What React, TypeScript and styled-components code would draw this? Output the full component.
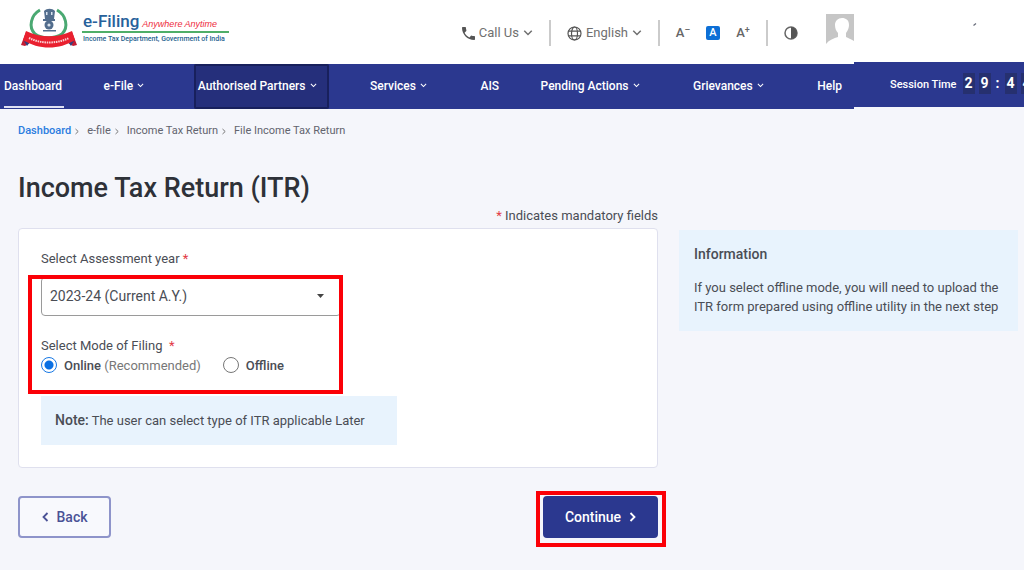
import React from "react";
import styled, { createGlobalStyle, css } from "styled-components";

const GlobalStyle = createGlobalStyle`
  *, *::before, *::after { box-sizing: border-box; }
  html, body { margin: 0; padding: 0; }
  body {
    background: #fff;
    color: #4a4d55;
    font-family: Roboto, "Liberation Sans", sans-serif;
    font-size: 13px;
    overflow-x: hidden;
  }
  button, select, input { font: inherit; color: inherit; margin: 0; }
`;

const navy = "#2b388f";
const red = "#fb0007";

const Page = styled.div`
  min-height: 100vh;
  display: flex;
  flex-direction: column;
  border-bottom: 1px solid #fff;
`;

/* ---------- Top bar ---------- */
const TopBar = styled.header`
  display: flex;
  align-items: flex-start;
  height: 62px;
  padding-left: 20px;
  background: #fff;
`;
const Brand = styled.a`
  display: flex;
  align-items: flex-start;
  gap: 4px;
  padding-top: 7px;
  text-decoration: none;
`;
const BrandText = styled.span`
  display: flex;
  flex-direction: column;
  padding-top: 4px;
`;
const BrandTop = styled.span`
  display: flex;
  align-items: baseline;
  gap: 3px;
  padding: 0 4px 0 1px;
  height: 20px;
  line-height: 20px;
  border-bottom: 2px solid #4fae68;
  box-sizing: content-box;
`;
const BrandName = styled.span`
  color: #27619b;
  font-size: 17px;
  font-weight: 500;
`;
const Tagline = styled.span`
  color: #ee2b3c;
  font: italic 400 9px/12px "Liberation Sans", sans-serif;
`;
const Department = styled.span`
  padding: 0 4px 0 1px;
  color: #1f5f8e;
  font-size: 7px;
  font-weight: 500;
  line-height: 12px;
  white-space: nowrap;
`;
const Tools = styled.div`
  display: flex;
  align-items: center;
  height: 26px;
  margin: 20px 0 0 auto;
`;
const ToolButton = styled.button`
  display: flex;
  align-items: center;
  gap: 4px;
  padding: 0;
  border: 0;
  background: none;
  color: #707070;
  font-size: 13px;
  line-height: 24px;
  white-space: nowrap;
`;
const Divider = styled.span`
  width: 2px;
  height: 26px;
  margin: 0 16px;
  background: #cbcbcb;
`;
const TextSizes = styled.div`
  display: flex;
  align-items: center;
  gap: 16px;
`;
const SizeButton = styled.button<{ $on?: boolean }>`
  width: 14px;
  height: 14px;
  padding: 0;
  border: 0;
  border-radius: 2px;
  background: ${(p) => (p.$on ? "#0d6fd6" : "none")};
  color: ${(p) => (p.$on ? "#fff" : "#666")};
  font-size: ${(p) => (p.$on ? 11 : 13)}px;
  font-weight: 500;
  line-height: 14px;
  white-space: nowrap;
  display: flex;
  justify-content: center;
`;
const Sign = styled.span`
  font-size: 9px;
  line-height: 8px;
`;
const UserArea = styled.div`
  display: flex;
  justify-content: space-between;
  width: 198px;
  margin-left: 28px;
  padding: 14px 47px 0 0;
`;

/* ---------- Navigation ---------- */
const NavRow = styled.div`
  display: flex;
  align-items: flex-start;
  background: #f5f6fb;
`;
const Menu = styled.nav`
  flex: 1;
  display: flex;
  justify-content: space-between;
  height: 47px;
  border-top: 2px solid #fff;
  padding-right: 12px;
  background: ${navy};
`;
const MenuLink = styled.a<{ $drop?: boolean; $current?: boolean; $focused?: boolean }>`
  position: relative;
  display: flex;
  align-items: center;
  gap: 4px;
  padding: 0 ${(p) => (p.$drop ? 12 : 0)}px 2px 4px;
  color: #fff;
  font-size: 12px;
  font-weight: 500;
  text-decoration: none;
  white-space: nowrap;
  ${(p) =>
    p.$focused &&
    css`
      background: #252f7b;
      border-radius: 2px;
      box-shadow: inset 0 0 0 2px #18205c;
    `}
  ${(p) =>
    p.$current &&
    css`
      &::after {
        content: "";
        position: absolute;
        left: 4px;
        right: -2px;
        bottom: 1px;
        height: 2px;
        background: #dfe1f3;
      }
    `}
`;
const Session = styled.div`
  display: flex;
  align-items: center;
  gap: 6px;
  width: 170px;
  height: 45px;
  padding-left: 36px;
  background: ${navy};
  color: #fff;
  font-size: 11px;
  font-weight: 500;
  white-space: nowrap;
  overflow: hidden;
`;
const Timer = styled.span`
  display: flex;
  align-items: center;
  gap: 4px;
`;
const Digit = styled.span<{ $plain?: boolean }>`
  flex: none;
  width: ${(p) => (p.$plain ? 6 : 12)}px;
  margin-bottom: 2px;
  background: ${(p) => (p.$plain ? "none" : "#26306f")};
  font-size: 14px;
  font-weight: 700;
  line-height: 21px;
  text-align: center;
`;

/* ---------- Content ---------- */
const Main = styled.main`
  flex: 1;
  padding: 14px 6px 23px 18px;
  background: #f5f6fb;
`;
const Crumbs = styled.nav`
  display: flex;
  align-items: center;
  gap: 4px;
  line-height: 16px;
  font-size: 11px;
  color: #62646e;
`;
const Crumb = styled.a<{ $first?: boolean }>`
  color: ${(p) => (p.$first ? "#2b7de0" : "inherit")};
  font-weight: ${(p) => (p.$first ? 500 : 400)};
  text-decoration: none;
`;
const CrumbMark = styled.svg`
  margin-right: 4px;
`;
const Title = styled.h1`
  margin: 33px 0 0;
  color: #2e3138;
  font-size: 27px;
  font-weight: 500;
  line-height: 32px;
`;
const Columns = styled.div`
  display: grid;
  grid-template-columns: 640fr 339fr;
  column-gap: 21px;
  align-items: start;
`;
const Mandatory = styled.p`
  margin: 3px 0 4px;
  line-height: 17px;
  text-align: right;
`;
const Star = styled.span`
  color: #e23b46;
`;
const Card = styled.section`
  padding: 20px 22px 22px;
  border: 1px solid #dfe0ee;
  border-radius: 4px;
  background: #fff;
`;
const Label = styled.label`
  display: block;
  line-height: 20px;
`;
const RedFrame = styled.div<{ $inset: string }>`
  position: relative;
  &::after {
    content: "";
    position: absolute;
    inset: ${(p) => p.$inset};
    border: 4px solid ${red};
    pointer-events: none;
  }
`;
const FilingOptions = styled(RedFrame)`
  width: 300px;
  margin-top: 8px;
`;
const SelectBox = styled.div`
  position: relative;
`;
const Select = styled.select`
  display: block;
  width: 100%;
  height: 39px;
  padding: 0 30px 2px 8px;
  border: 1px solid #9a9a9a;
  border-radius: 4px;
  appearance: none;
  background: #fff;
  font-size: 14px;
`;
const SelectArrow = styled.svg`
  position: absolute;
  right: 17px;
  top: 17px;
  pointer-events: none;
`;
const Modes = styled.fieldset`
  margin: 0;
  padding: 20px 0 18px;
  border: 0;
`;
const Legend = styled.legend`
  float: left;
  width: 100%;
  padding: 0;
  line-height: 20px;
`;
const Options = styled.div`
  clear: both;
  display: flex;
  align-items: center;
  gap: 22px;
  height: 18px;
`;
const Option = styled.label`
  display: flex;
  align-items: center;
  gap: 7px;
  font-weight: 500;
  white-space: nowrap;
`;
const Radio = styled.input`
  appearance: none;
  width: 16px;
  height: 16px;
  border: 1px solid #777;
  border-radius: 50%;
  background: #fff;
  &:checked {
    border-color: #1677e4;
    background: radial-gradient(circle, #0b70e3 4px, #fff 5px);
  }
`;
const Soft = styled.span`
  color: #777;
  font-weight: 400;
`;
const Note = styled.p`
  width: 356px;
  max-width: 100%;
  margin: 4px 0 0;
  padding: 14px;
  background: #e8f3fd;
  line-height: 21px;
`;
const Strong = styled.strong`
  font-size: 14px;
  font-weight: 500;
`;
const Info = styled.aside`
  margin-top: 26px;
  padding: 14px 15px 15px;
  background: #e8f3fd;
`;
const InfoTitle = styled.h2`
  margin: 0 0 14px;
  font-size: 14px;
  font-weight: 500;
  line-height: 20px;
`;
const InfoText = styled.p`
  margin: 0;
  line-height: 19px;
`;
const Actions = styled.div`
  display: flex;
  justify-content: space-between;
  margin-top: 28px;
`;
const Button = styled.button<{ $primary?: boolean }>`
  display: flex;
  align-items: center;
  justify-content: center;
  gap: 8px;
  width: ${(p) => (p.$primary ? 115 : 93)}px;
  height: 42px;
  padding: 0;
  border: 2px solid ${(p) => (p.$primary ? navy : "#8e94ca")};
  border-radius: 4px;
  background: ${(p) => (p.$primary ? navy : "#f8f9fd")};
  color: ${(p) => (p.$primary ? "#fff" : "#4a5296")};
  font-size: 14px;
  font-weight: 500;
`;

const Chevron = ({ size = 7 }: { size?: number }) => (
  <svg width={size} height={size} viewBox="0 0 8 8" fill="none" stroke="currentColor" strokeWidth="1.2" aria-hidden>
    <path d="M1 2.2 4 5.2 7 2.2" />
  </svg>
);

const Emblem = () => (
  <svg width="58" height="42" viewBox="0 0 58 42" aria-hidden>
    <g fill="none" stroke="#4aa972" strokeWidth="3">
      <path d="M20 3C11 8 8 20 15 27c6 5 20 5 27 0 7-7 4-19-5-24" />
    </g>
    <g fill="#526d8d">
      <path d="M24 4c3-3 8-3 11 0l-1 8h-9z" />
      <rect x="23" y="12" width="12" height="2" />
      <circle cx="29" cy="18" r="4.5" />
      <rect x="23" y="23" width="13" height="1.5" />
    </g>
    <g fill="#d9e3ee">
      <rect x="26" y="5" width="1.5" height="3" />
      <rect x="31" y="5" width="1.5" height="3" />
      <circle cx="29" cy="18" r="1.6" />
    </g>
    <path d="M1 38l5-13 5 10-6 4zM57 38l-5-13-5 10 6 4z" fill="#c31b32" />
    <path d="M4 34l6 1-3 4zM54 34l-6 1 3 4z" fill="#33427d" />
    <path d="M6 24c14 7 32 7 46 0l3 9c-16 10-36 10-52 0z" fill="#e9202f" />
    <path d="M9 31c12 6 28 6 40 0" fill="none" stroke="#fbd3d6" strokeWidth="2" strokeDasharray="1.5 .8" />
  </svg>
);

const menu = [
  { text: "Dashboard", current: true },
  { text: "e-File", drop: true },
  { text: "Authorised Partners", drop: true, focused: true },
  { text: "Services", drop: true },
  { text: "AIS" },
  { text: "Pending Actions", drop: true },
  { text: "Grievances", drop: true },
  { text: "Help" },
];

const crumbs = ["Dashboard", "e-file", "Income Tax Return", "File Income Tax Return"];

export default function App() {
  return (
    <Page>
      <GlobalStyle />
      <TopBar>
        <Brand href="#">
          <Emblem />
          <BrandText>
            <BrandTop>
              <BrandName>e-Filing</BrandName>
              <Tagline>Anywhere Anytime</Tagline>
            </BrandTop>
            <Department>Income Tax Department, Government of India</Department>
          </BrandText>
        </Brand>
        <Tools>
          <ToolButton>
            <svg width="13" height="13" viewBox="3 3 18 18" fill="#555" aria-hidden>
              <path d="M6.600 10.800c1.400 2.800 3.800 5.100 6.600 6.600l2.200-2.200c.3-.3.7-.4 1-.2 1.100.4 2.300.6 3.600.6.6 0 1 .4 1 1V20c0 .6-.4 1-1 1C10.600 21 3 13.400 3 4c0-.6.4-1 1-1h3.500c.6 0 1 .4 1 1 0 1.300.2 2.500.6 3.600.1.300 0 .7-.2 1z" />
            </svg>
            Call Us
            <Chevron size={10} />
          </ToolButton>
          <Divider />
          <ToolButton>
            <svg width="15" height="15" viewBox="0 0 15 15" fill="none" stroke="#555" strokeWidth="1.2" aria-hidden>
              <circle cx="7.500" cy="7.500" r="6.500" />
              <ellipse cx="7.500" cy="7.500" rx="3" ry="6.500" />
              <path d="M1.500 5.200h12M1.500 9.800h12" />
            </svg>
            English
            <Chevron size={10} />
          </ToolButton>
          <Divider />
          <TextSizes>
            <SizeButton aria-label="Decrease text size">A<Sign>–</Sign></SizeButton>
            <SizeButton $on aria-label="Normal text size">A</SizeButton>
            <SizeButton aria-label="Increase text size">A<Sign>+</Sign></SizeButton>
          </TextSizes>
          <Divider />
          <ToolButton aria-label="Contrast">
            <svg width="14" height="14" viewBox="0 0 14 14" aria-hidden>
              <circle cx="7" cy="7" r="6" fill="#fff" stroke="#666" strokeWidth="1.500" />
              <path d="M7 1a6 6 0 0 1 0 12z" fill="#555" />
            </svg>
          </ToolButton>
        </Tools>
        <UserArea>
          <svg width="28" height="30" viewBox="0 0 28 30" role="img" aria-label="Profile">
            <path d="M0 0h28v27c-3-2-6-3-8-4v-4c2-3 3-5 3-8 0-5-3-7-7-7s-7 3-7 7c0 3 1 6 3 8v4c-4 1-9 3-12 7z" fill="#c6c6c6" />
          </svg>
          <svg width="4" height="14" viewBox="0 0 4 14" aria-hidden>
            <path d="M.5 11.500 3 9.500" stroke="#666a78" strokeWidth="1.300" />
          </svg>
        </UserArea>
      </TopBar>
      <NavRow>
        <Menu>
          {menu.map((m) => (
            <MenuLink key={m.text} href="#" $drop={m.drop} $current={m.current} $focused={m.focused}>
              {m.text}
              {m.drop && <Chevron />}
            </MenuLink>
          ))}
        </Menu>
        <Session>
          Session Time
          <Timer>
            <Digit>2</Digit>
            <Digit>9</Digit>
            <Digit $plain>:</Digit>
            <Digit>4</Digit>
            <Digit>4</Digit>
          </Timer>
        </Session>
      </NavRow>
      <Main>
        <Crumbs aria-label="Breadcrumb">
          {crumbs.map((c, i) => (
            <React.Fragment key={c}>
              <Crumb href="#" $first={i === 0}>{c}</Crumb>
              {i < crumbs.length - 1 && (
                <CrumbMark width="4" height="7" viewBox="0 0 4 7" fill="none" stroke="#777" aria-hidden>
                  <path d="M.5 1 3.200 3.500.5 6" />
                </CrumbMark>
              )}
            </React.Fragment>
          ))}
        </Crumbs>
        <Title>Income Tax Return (ITR)</Title>
        <Columns>
          <div>
            <Mandatory><Star>*</Star> Indicates mandatory fields</Mandatory>
            <Card>
              <Label htmlFor="year">Select Assessment year <Star>*</Star></Label>
              <FilingOptions $inset="-2px -2px -2px -13px">
                <SelectBox>
                  <Select id="year">
                    <option>2023-24 (Current A.Y.)</option>
                  </Select>
                  <SelectArrow width="7" height="4" viewBox="0 0 7 4" aria-hidden>
                    <path d="M0 0h7L3.500 4z" fill="#444" />
                  </SelectArrow>
                </SelectBox>
                <Modes>
                  <Legend>Select Mode of Filing &nbsp;<Star>*</Star></Legend>
                  <Options>
                    <Option>
                      <Radio type="radio" name="mode" defaultChecked />
                      <span>Online <Soft>(Recommended)</Soft></span>
                    </Option>
                    <Option>
                      <Radio type="radio" name="mode" />
                      Offline
                    </Option>
                  </Options>
                </Modes>
              </FilingOptions>
              <Note><Strong>Note:</Strong> The user can select type of ITR applicable Later</Note>
            </Card>
            <Actions>
              <Button>
                <svg width="7" height="10" viewBox="0 0 7 10" fill="none" stroke="currentColor" strokeWidth="1.800" aria-hidden>
                  <path d="M5.500 1 1.500 5l4 4" />
                </svg>
                Back
              </Button>
              <RedFrame $inset="-5px -8px -9px -7px">
                <Button $primary>
                  Continue
                  <svg width="7" height="10" viewBox="0 0 7 10" fill="none" stroke="currentColor" strokeWidth="1.800" aria-hidden>
                    <path d="M1.500 1l4 4-4 4" />
                  </svg>
                </Button>
              </RedFrame>
            </Actions>
          </div>
          <Info>
            <InfoTitle>Information</InfoTitle>
            <InfoText>If you select offline mode, you will need to upload the ITR form prepared using offline utility in the next step</InfoText>
          </Info>
        </Columns>
      </Main>
    </Page>
  );
}
